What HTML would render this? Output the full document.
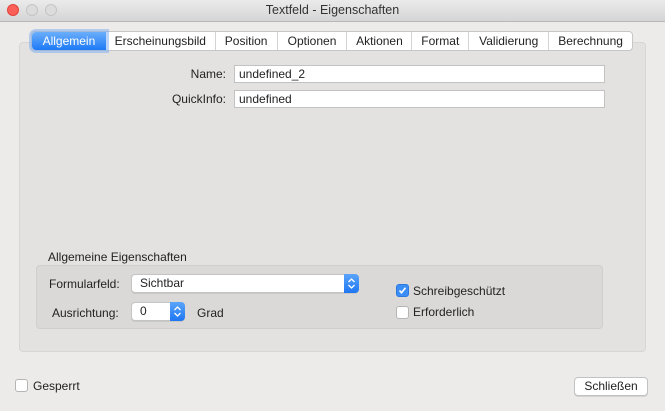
<!DOCTYPE html>
<html><head><meta charset="utf-8"><style>
*{box-sizing:border-box;margin:0;padding:0}
body{width:665px;height:411px;overflow:hidden;background:#ecebe9;font-family:"Liberation Sans",sans-serif;font-size:12px;color:#222;position:relative}
.a{position:absolute}
.title{left:0;top:0;width:665px;height:22px;background:linear-gradient(#ebebeb,#d6d5d6);border-bottom:1px solid #b8b8b8;text-align:center;line-height:21px;font-size:12.5px;color:#333}
.dot{width:12px;height:12px;border-radius:50%;top:4px;background:#dcdcdc;border:1px solid #c4c4c4}
.box{left:19px;top:42px;width:627px;height:310px;background:#e3e2e0;border:1px solid #d7d6d4;border-radius:4px}
.tabs{left:31px;top:31px;height:20px;width:602px;background:#fff;border:1px solid #c6c6c6;border-radius:4px;display:flex}
.tab{height:18px;line-height:18px;text-align:center;border-left:1px solid #d3d3d3;font-size:12px;color:#222}
.tab.sel{background:linear-gradient(#6aaefc,#1e7af5);color:#fff;border-left:none;border-radius:4px 0 0 4px;box-shadow:0 0 0 3px rgba(120,170,240,.5)}
.lbl{text-align:right;font-size:12px}
.inp{background:#fff;border:1px solid #c2c2c2;height:18px;line-height:16px;padding-left:4px;font-size:12px}
.grp{left:36px;top:265px;width:567px;height:64px;background:#dad9d7;border:1px solid #d0cfcd;border-radius:4px}
.pop{background:#fff;border:1px solid #c4c4c4;border-radius:4px;height:19px;line-height:17px;padding-left:8px;box-shadow:0 1px 0 rgba(0,0,0,.08)}
.arr{position:absolute;right:-1px;top:-1px;width:15px;height:19px;background:linear-gradient(#5aa4fb,#1e76f2);border-radius:0 4px 4px 0}
.cb{width:13px;height:13px;border:1px solid #b5b5b5;background:#fff;border-radius:3px}
.cb.on{background:#3b8ef7;border-color:#2c7ae0}
</style></head><body>
<div class="a title">Textfeld - Eigenschaften</div>
<div class="a dot" style="left:7px;background:#fc5f57;border-color:#e0443e"></div>
<div class="a dot" style="left:26px"></div>
<div class="a dot" style="left:45px"></div>
<div class="a box"></div>
<div class="a tabs">
<div class="tab sel" style="width:74px">Allgemein</div>
<div class="tab" style="width:109px;border-left:none">Erscheinungsbild</div>
<div class="tab" style="width:62px">Position</div>
<div class="tab" style="width:70px">Optionen</div>
<div class="tab" style="width:65px">Aktionen</div>
<div class="tab" style="width:57px">Format</div>
<div class="tab" style="width:80px">Validierung</div>
<div class="tab" style="width:84px">Berechnung</div>
</div>
<div class="a lbl" style="left:150px;top:67px;width:76px">Name:</div>
<div class="a inp" style="left:234px;top:65px;width:371px">undefined_2</div>
<div class="a lbl" style="left:150px;top:92px;width:76px">QuickInfo:</div>
<div class="a inp" style="left:234px;top:90px;width:371px">undefined</div>
<div class="a" style="left:48px;top:250px">Allgemeine Eigenschaften</div>
<div class="a grp"></div>
<div class="a" style="left:49px;top:277px">Formularfeld:</div>
<div class="a pop" style="left:131px;top:274px;width:228px">Sichtbar<div class="arr"><svg width="15" height="19"><path d="M4.5 8 7.5 5 10.5 8M4.5 11 7.5 14 10.5 11" stroke="#fff" stroke-width="1.3" fill="none"/></svg></div></div>
<div class="a" style="left:52px;top:306px">Ausrichtung:</div>
<div class="a pop" style="left:131px;top:302px;width:54px">0<div class="arr"><svg width="15" height="19"><path d="M4.5 8 7.5 5 10.5 8M4.5 11 7.5 14 10.5 11" stroke="#fff" stroke-width="1.3" fill="none"/></svg></div></div>
<div class="a" style="left:197px;top:306px">Grad</div>
<div class="a cb on" style="left:396px;top:284px"><svg width="11" height="11"><path d="M2.5 5.5 4.5 7.8 8.5 2.8" stroke="#fff" stroke-width="1.6" fill="none"/></svg></div>
<div class="a" style="left:413px;top:284px">Schreibgeschützt</div>
<div class="a cb" style="left:396px;top:306px"></div>
<div class="a" style="left:413px;top:305px">Erforderlich</div>
<div class="a cb" style="left:15px;top:379px"></div>
<div class="a" style="left:33px;top:379px">Gesperrt</div>
<div class="a" style="left:574px;top:377px;width:74px;height:19px;background:#fff;border:1px solid #c2c2c2;border-radius:4px;text-align:center;line-height:17px;box-shadow:0 1px 0 rgba(0,0,0,.1)">Schließen</div>
</body></html>
